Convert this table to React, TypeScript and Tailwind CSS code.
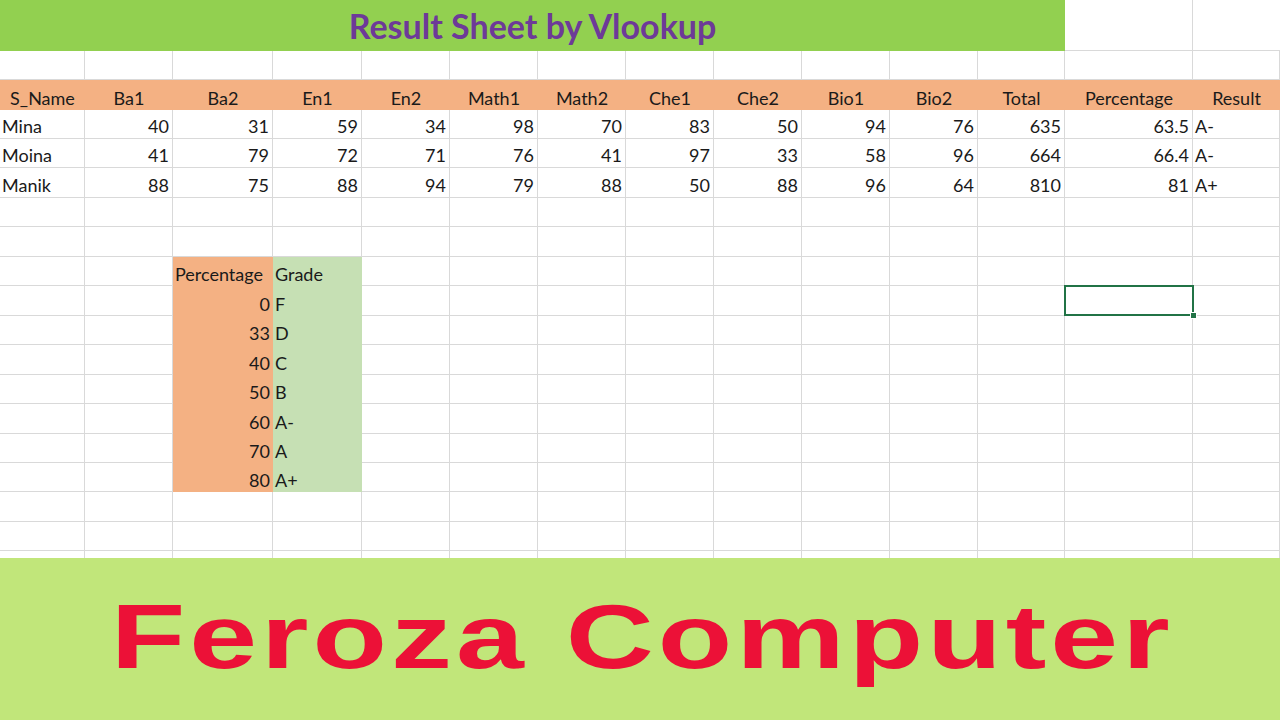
const cols = [85, 88, 100, 89, 88, 88, 88, 88, 88, 88, 88, 87, 128, 87];

const headers = ["S_Name", "Ba1", "Ba2", "En1", "En2", "Math1", "Math2", "Che1", "Che2", "Bio1", "Bio2", "Total", "Percentage", "Result"];

const students = [
  ["Mina", "40", "31", "59", "34", "98", "70", "83", "50", "94", "76", "635", "63.5", "A-"],
  ["Moina", "41", "79", "72", "71", "76", "41", "97", "33", "58", "96", "664", "66.4", "A-"],
  ["Manik", "88", "75", "88", "94", "79", "88", "50", "88", "96", "64", "810", "81", "A+"],
];

const grades: [string, string][] = [
  ["0", "F"],
  ["33", "D"],
  ["40", "C"],
  ["50", "B"],
  ["60", "A-"],
  ["70", "A"],
  ["80", "A+"],
];

// heights of the rows under the header, in px
const rowHeights = [29, 29, 30, 29, 30, 29, 30, 29, 30, 29, 30, 29, 29, 30, 29, 12];

type Cell = { text?: string; align?: "left" | "right"; fill?: string };

function Row({ height, cells }: { height: number; cells: Cell[] }) {
  return (
    <div className="flex" style={{ height }}>
      {cols.map((w, i) => {
        const c = cells[i] || {};
        return (
          <div
            key={i}
            style={{ width: w }}
            className={`flex shrink-0 items-end pb-[2px] leading-[20px] ${
              c.fill ? c.fill : "border-b border-r border-[#d9d9d9] bg-white"
            } ${c.align === "right" ? "justify-end pr-[3px]" : "justify-start pl-[2px]"}`}
          >
            {c.text}
          </div>
        );
      })}
    </div>
  );
}

export default function App() {
  const bodyRows: Cell[][] = rowHeights.map((_, r) => {
    if (r < 3) {
      return students[r].map((t, i) => ({ text: t, align: i === 0 || i === 13 ? "left" : "right" }));
    }
    if (r === 5) {
      const row: Cell[] = cols.map(() => ({}));
      row[2] = { text: "Percentage", fill: "bg-[#f4b183]" };
      row[3] = { text: "Grade", fill: "bg-[#c6e0b4]" };
      return row;
    }
    if (r >= 6 && r <= 12) {
      const [p, g] = grades[r - 6];
      const row: Cell[] = cols.map(() => ({}));
      row[2] = { text: p, align: "right", fill: "bg-[#f4b183]" };
      row[3] = { text: g, fill: "bg-[#c6e0b4]" };
      return row;
    }
    return cols.map(() => ({}));
  });

  return (
    <div className="flex h-[720px] w-[1280px] flex-col overflow-hidden bg-white text-[18px] text-[#1a1a1a]" style={{ fontFamily: "Lato, 'Open Sans', sans-serif" }}>
      <div className="h-[558px] shrink-0 overflow-hidden">
        {/* title row */}
        <div className="flex h-[51px]">
          <div className="flex w-[1065px] shrink-0 items-center justify-center bg-[#92d050] pb-[1px] text-[34px] font-bold text-[#6d3a98]">
            Result Sheet by Vlookup
          </div>
          <div className="w-[128px] shrink-0 border-b border-r border-[#d9d9d9]" />
          <div className="w-[87px] shrink-0 border-b border-[#d9d9d9]" />
        </div>
        <Row height={29} cells={[]} />
        {/* header row */}
        <div className="flex h-[30px] bg-[#f4b183]">
          {cols.map((w, i) => (
            <div key={i} style={{ width: w }} className="flex shrink-0 items-end justify-center pb-[2px] leading-[20px]">
              {headers[i]}
            </div>
          ))}
        </div>
        {bodyRows.map((cells, r) =>
          r === 6 ? (
            <div key={r} className="relative">
              <Row height={rowHeights[r]} cells={cells} />
              <div className="pointer-events-none absolute left-[1064px] top-[-1px] h-[31px] w-[130px] border-2 border-[#217346]">
                <div className="absolute -bottom-[5px] -right-[5px] h-[7px] w-[7px] border border-white bg-[#217346]" />
              </div>
            </div>
          ) : (
            <Row key={r} height={rowHeights[r]} cells={cells} />
          )
        )}
      </div>
      <div className="flex flex-1 items-center justify-center overflow-hidden bg-[#c1e67a] pb-[6px]">
        <span
          className="inline-block scale-x-[1.34] pl-[3px] text-[91px] font-bold leading-none tracking-[3px] whitespace-nowrap text-[#ec1137]"
          style={{ fontFamily: "'Liberation Sans', Arial, sans-serif" }}
        >
          Feroza Computer
        </span>
      </div>
    </div>
  );
}
